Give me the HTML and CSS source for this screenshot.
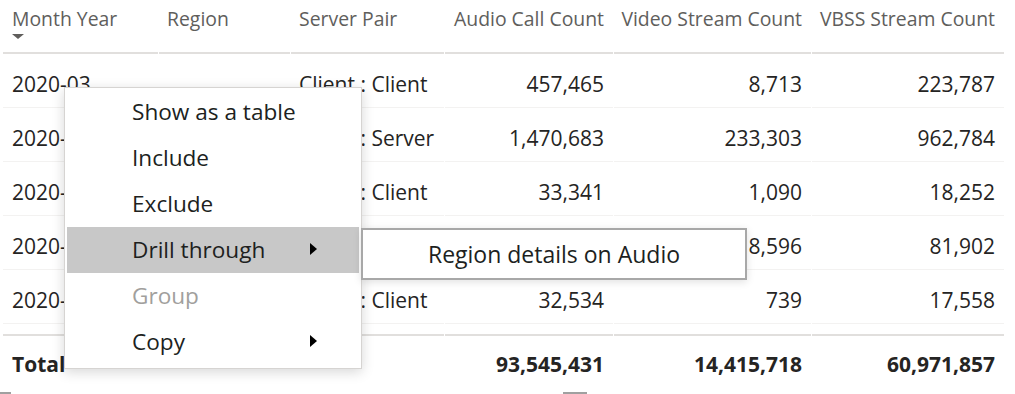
FILE: index.html
```html
<!DOCTYPE html>
<html lang="en">
<head>
<meta charset="utf-8">
<title>Table with context menu</title>
<link rel="stylesheet" href="styles.css">
</head>
<body>
<div class="page">
  <div class="table">
    <div class="th">Month Year<span class="sort"></span></div>
    <div class="th">Region</div>
    <div class="th">Server Pair</div>
    <div class="th num">Audio Call Count</div>
    <div class="th num">Video Stream Count</div>
    <div class="th num">VBSS Stream Count</div>

    <div class="td">2020-03</div>
    <div class="td"></div>
    <div class="td">Client : Client</div>
    <div class="td num">457,465</div>
    <div class="td num">8,713</div>
    <div class="td num">223,787</div>

    <div class="td">2020-04</div>
    <div class="td"></div>
    <div class="td">Client : Server</div>
    <div class="td num">1,470,683</div>
    <div class="td num">233,303</div>
    <div class="td num">962,784</div>

    <div class="td">2020-04</div>
    <div class="td"></div>
    <div class="td">Client : Client</div>
    <div class="td num">33,341</div>
    <div class="td num">1,090</div>
    <div class="td num">18,252</div>

    <div class="td">2020-05</div>
    <div class="td"></div>
    <div class="td"></div>
    <div class="td num"></div>
    <div class="td num">8,596</div>
    <div class="td num">81,902</div>

    <div class="td">2020-05</div>
    <div class="td"></div>
    <div class="td">Client : Client</div>
    <div class="td num">32,534</div>
    <div class="td num">739</div>
    <div class="td num">17,558</div>

    <div class="tt">Total</div>
    <div class="tt"></div>
    <div class="tt"></div>
    <div class="tt num">93,545,431</div>
    <div class="tt num">14,415,718</div>
    <div class="tt num">60,971,857</div>
  </div>

  <div class="menu">
    <div class="item">Show as a table</div>
    <div class="item">Include</div>
    <div class="item">Exclude</div>
    <div class="item active">Drill through<span class="arrow"></span></div>
    <div class="item disabled">Group</div>
    <div class="item">Copy<span class="arrow"></span></div>
  </div>

  <div class="submenu">Region details on Audio</div>

  <div class="scroll scroll-left"></div>
  <div class="scroll scroll-mid"></div>
</div>
</body>
</html>
```

FILE: styles.css
```css
html, body {
  margin: 0;
  padding: 0;
  background: #ffffff;
}

body {
  width: 1015px;
  height: 394px;
  overflow: hidden;
  font-family: "Open Sans", "Noto Sans", sans-serif;
  color: #252423;
}

.page {
  position: relative;
  width: 1015px;
  height: 394px;
}

.table {
  display: grid;
  grid-template-columns: 155px 131px 153px 168px 197px 192px;
  column-gap: 1px;
  padding-left: 3px;
  width: 1001px;
}

.th {
  height: 54px;
  box-sizing: border-box;
  padding: 6px 9px 0 8px;
  font-size: 19.4px;
  line-height: 26px;
  color: #605e5c;
  border-bottom: 2px solid #e1dfdd;
  white-space: nowrap;
  display: flex;
  flex-direction: column;
}

.th:first-child {
  padding-left: 9px;
}

.sort {
  display: block;
  width: 0;
  height: 0;
  margin-top: 2px;
  border-left: 6px solid transparent;
  border-right: 6px solid transparent;
  border-top: 5px solid #605e5c;
}

.td {
  height: 54px;
  box-sizing: border-box;
  padding: 18px 9px 11px 8px;
  font-size: 21px;
  line-height: 24px;
  border-bottom: 1px solid #f3f2f1;
  white-space: nowrap;
  overflow: hidden;
}

.td:nth-child(6n+1) {
  padding-left: 9px;
}

.tt {
  margin-top: 10px;
  padding: 16px 9px 0 9px;
  font-size: 21px;
  line-height: 24px;
  font-weight: 700;
  border-top: 2px solid #e1dfdd;
  white-space: nowrap;
}

.num {
  text-align: right;
  align-items: flex-end;
}

.menu {
  position: absolute;
  left: 64px;
  top: 87px;
  width: 298px;
  box-sizing: border-box;
  padding: 1px 2px 3px 2px;
  background: #ffffff;
  border: 1px solid #d6d4d2;
  box-shadow: 0 3px 12px rgba(0, 0, 0, 0.16);
}

.item {
  height: 46px;
  display: flex;
  align-items: center;
  justify-content: space-between;
  padding: 0 42px 0 65px;
  font-size: 22.6px;
  line-height: 46px;
  color: #201f1e;
}

.item.active {
  background: #c8c8c8;
}

.item.disabled {
  color: #a19f9d;
}

.arrow {
  width: 0;
  height: 0;
  margin-top: -3px;
  border-top: 6px solid transparent;
  border-bottom: 6px solid transparent;
  border-left: 7px solid #000000;
}

.submenu {
  position: absolute;
  left: 361px;
  top: 228px;
  width: 386px;
  height: 52px;
  box-sizing: border-box;
  border: 2px solid #a8a8a8;
  background: #ffffff;
  display: flex;
  align-items: center;
  justify-content: center;
  font-size: 23px;
  color: #201f1e;
  box-shadow: 0 2px 8px rgba(0, 0, 0, 0.12);
}

.scroll {
  position: absolute;
  bottom: 0;
  height: 2px;
  background: #a0a0a0;
}

.scroll-left {
  left: 0;
  width: 11px;
}

.scroll-mid {
  left: 563px;
  width: 24px;
}
```
